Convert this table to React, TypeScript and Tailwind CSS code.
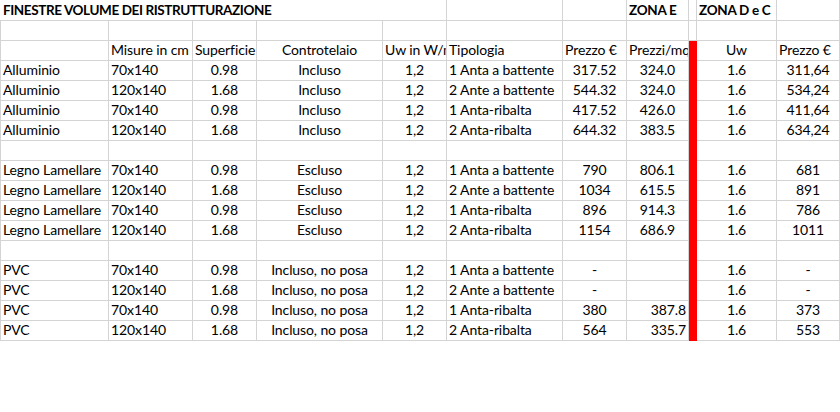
type Align = 'l' | 'c' | 'r'

const COLS = [
  'w-[109px] border-l',
  'w-[84px]',
  'w-[64px]',
  'w-[126px]',
  'w-[64px]',
  'w-[116px]',
  'w-[64px]',
  'w-[62px]',
  'w-[8px]',
  'w-[80px]',
  'w-[63px]',
]

const DATA_ALIGN: Align[] = ['l', 'l', 'c', 'c', 'c', 'l', 'c', 'c', 'c', 'c', 'c']

const alignClass = { l: 'justify-start', c: 'justify-center', r: 'justify-end' }

type Row = { cells: string[]; align?: Align[]; red?: boolean }

const blank = (): Row => ({ cells: Array(11).fill(''), red: true })

const r = (cells: string[], align?: Align[]): Row => ({ cells, align, red: true })

const ROWS: Row[] = [
  r(['', 'Misure in cm', 'Superficie', 'Controtelaio', 'Uw in W/m²K', 'Tipologia', 'Prezzo €', 'Prezzi/mq', '', 'Uw', 'Prezzo €'],
    ['l', 'l', 'l', 'c', 'l', 'l', 'l', 'l', 'c', 'c', 'l']),
  r(['Alluminio', '70x140', '0.98', 'Incluso', '1,2', '1 Anta a battente', '317.52', '324.0', '', '1.6', '311,64']),
  r(['Alluminio', '120x140', '1.68', 'Incluso', '1,2', '2 Ante a battente', '544.32', '324.0', '', '1.6', '534,24']),
  r(['Alluminio', '70x140', '0.98', 'Incluso', '1,2', '1 Anta-ribalta', '417.52', '426.0', '', '1.6', '411,64']),
  r(['Alluminio', '120x140', '1.68', 'Incluso', '1,2', '2 Anta-ribalta', '644.32', '383.5', '', '1.6', '634,24']),
  blank(),
  r(['Legno Lamellare', '70x140', '0.98', 'Escluso', '1,2', '1 Anta a battente', '790', '806.1', '', '1.6', '681']),
  r(['Legno Lamellare', '120x140', '1.68', 'Escluso', '1,2', '2 Ante a battente', '1034', '615.5', '', '1.6', '891']),
  r(['Legno Lamellare', '70x140', '0.98', 'Escluso', '1,2', '1 Anta-ribalta', '896', '914.3', '', '1.6', '786']),
  r(['Legno Lamellare', '120x140', '1.68', 'Escluso', '1,2', '2 Anta-ribalta', '1154', '686.9', '', '1.6', '1011']),
  blank(),
  r(['PVC', '70x140', '0.98', 'Incluso, no posa', '1,2', '1 Anta a battente', '-', '', '', '1.6', '-']),
  r(['PVC', '120x140', '1.68', 'Incluso, no posa', '1,2', '2 Ante a battente', '-', '', '', '1.6', '-']),
  r(['PVC', '70x140', '0.98', 'Incluso, no posa', '1,2', '1 Anta-ribalta', '380', '387.8', '', '1.6', '373'],
    ['l', 'l', 'c', 'c', 'c', 'l', 'c', 'r', 'c', 'c', 'c']),
  r(['PVC', '120x140', '1.68', 'Incluso, no posa', '1,2', '2 Anta-ribalta', '564', '335.7', '', '1.6', '553'],
    ['l', 'l', 'c', 'c', 'c', 'l', 'c', 'r', 'c', 'c', 'c']),
]

function Cell({ i, align, red, children }: { i: number; align: Align; red?: boolean; children?: string }) {
  const isRed = red && i === 8
  return (
    <div
      className={`flex h-full shrink-0 items-end overflow-hidden whitespace-nowrap px-[2px] pb-[1px] ${COLS[i]} ${
        isRed ? 'border-b border-[#ff0000] bg-[#ff0000]' : 'border-r border-b border-[#d4d4d4]'
      } ${alignClass[align]}`}
    >
      {children}
    </div>
  )
}

export default function App() {
  return (
    <div
      className="h-[412px] w-[840px] overflow-hidden bg-white text-[14px] leading-[18px] tracking-[-0.1px] text-black"
      style={{ fontFamily: 'Lato, "Liberation Sans", sans-serif' }}
    >
      {/* riga titolo */}
      <div className="flex h-[21px]">
        <div className="flex h-full w-[383px] shrink-0 items-end border-b border-[#d4d4d4] px-[3px] pb-[1px] text-[13.5px] font-bold tracking-[-0.4px] whitespace-nowrap">
          FINESTRE VOLUME DEI RISTRUTTURAZIONE
        </div>
        <Cell i={4} align="l" />
        <Cell i={5} align="l" />
        <Cell i={6} align="l" />
        <div className="flex h-full w-[62px] shrink-0 items-end border-r border-b border-[#d4d4d4] px-[2px] pb-[1px] text-[13.5px] font-bold tracking-[-0.3px] whitespace-nowrap">
          ZONA E
        </div>
        <Cell i={8} align="c" />
        <div className="flex h-full w-[80px] shrink-0 items-end border-r border-b border-[#d4d4d4] px-[2px] pb-[1px] text-[13.5px] font-bold tracking-[-0.3px] whitespace-nowrap">
          ZONA D e C
        </div>
        <Cell i={10} align="c" />
      </div>

      {/* riga vuota */}
      <div className="flex h-[20px]">
        {COLS.map((_, i) => (
          <Cell key={i} i={i} align="c" />
        ))}
      </div>

      {ROWS.map((row, ri) => (
        <div key={ri} className="flex h-[20px]">
          {row.cells.map((c, i) => (
            <Cell key={i} i={i} align={(row.align ?? DATA_ALIGN)[i]} red={row.red}>
              {c}
            </Cell>
          ))}
        </div>
      ))}
    </div>
  )
}
